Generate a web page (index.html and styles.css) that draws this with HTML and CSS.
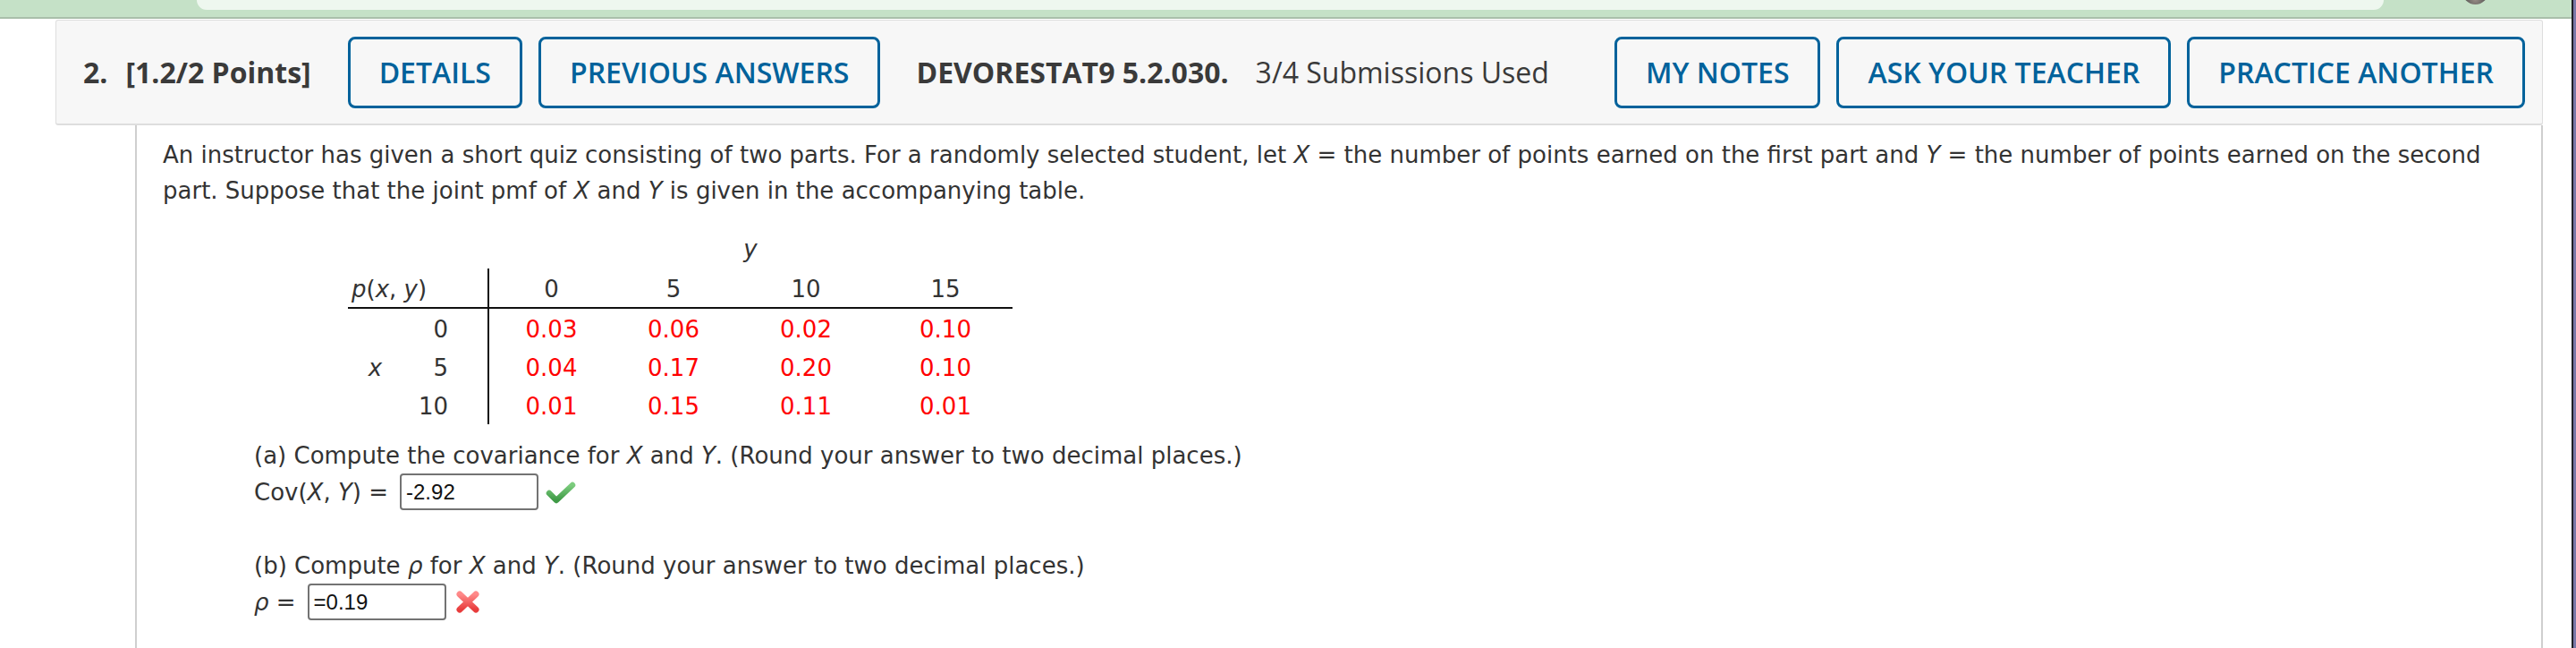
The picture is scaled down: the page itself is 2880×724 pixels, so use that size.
FILE: index.html
```html
<!DOCTYPE html>
<html lang="en">
<head>
<meta charset="utf-8">
<title>Question 2</title>
<link rel="stylesheet" href="styles.css">
</head>
<body>
<div class="page">
  <div class="main">
    <div class="topbar">
      <div class="pill"></div>
      <div class="avatar"></div>
    </div>
    <div class="question">
      <div class="qhead">
        <span class="qnum">2.</span>
        <span class="points">[1.2/2 Points]</span>
        <button class="btn btn-first">DETAILS</button>
        <button class="btn">PREVIOUS ANSWERS</button>
        <span class="code">DEVORESTAT9 5.2.030.</span>
        <span class="subs">3/4 Submissions Used</span>
        <div class="actions">
          <button class="btn">MY NOTES</button>
          <button class="btn">ASK YOUR TEACHER</button>
          <button class="btn">PRACTICE ANOTHER</button>
        </div>
      </div>
      <div class="qbody">
        <p class="prompt">An instructor has given a short quiz consisting of two parts. For a randomly selected student, let <i>X</i> = the number of points earned on the first part and <i>Y</i> = the number of points earned on the second part. Suppose that the joint pmf of <i>X</i> and <i>Y</i> is given in the accompanying table.</p>
        <table class="pmf">
          <colgroup>
            <col class="c-lab"><col class="c-row"><col class="c-a"><col class="c-b"><col class="c-c"><col class="c-d">
          </colgroup>
          <tr class="r-y">
            <td colspan="2"></td>
            <td colspan="4" class="ctr"><i>y</i></td>
          </tr>
          <tr class="r-head">
            <td colspan="2" class="pxy"><i>p</i>(<i>x</i>, <i>y</i>)</td>
            <td class="ctr vline">0</td>
            <td class="ctr">5</td>
            <td class="ctr">10</td>
            <td class="ctr">15</td>
          </tr>
          <tr>
            <td></td>
            <td class="rl">0</td>
            <td class="ctr vline val">0.03</td>
            <td class="ctr val">0.06</td>
            <td class="ctr val">0.02</td>
            <td class="ctr val">0.10</td>
          </tr>
          <tr>
            <td class="ctr"><i>x</i></td>
            <td class="rl">5</td>
            <td class="ctr vline val">0.04</td>
            <td class="ctr val">0.17</td>
            <td class="ctr val">0.20</td>
            <td class="ctr val">0.10</td>
          </tr>
          <tr>
            <td></td>
            <td class="rl">10</td>
            <td class="ctr vline val">0.01</td>
            <td class="ctr val">0.15</td>
            <td class="ctr val">0.11</td>
            <td class="ctr val">0.01</td>
          </tr>
        </table>
        <div class="part">
          <p class="ask">(a) Compute the covariance for <i>X</i> and <i>Y</i>. (Round your answer to two decimal places.)</p>
          <div class="answer">
            <span class="lbl">Cov(<i>X</i>, <i>Y</i>) =</span>
            <input class="field" type="text" value="-2.92" readonly>
            <svg class="mark check" width="34" height="26" viewBox="0 0 34 26">
              <defs>
                <linearGradient id="gg" x1="0" y1="0" x2="0" y2="1">
                  <stop offset="0" stop-color="#7ccc7e"/>
                  <stop offset="1" stop-color="#3f9a46"/>
                </linearGradient>
              </defs>
              <path d="M4 14 L12 22 L30 5" fill="none" stroke="url(#gg)" stroke-width="6.5" stroke-linecap="round" stroke-linejoin="round"/>
            </svg>
          </div>
        </div>
        <div class="part part-b">
          <p class="ask">(b) Compute <i>ρ</i> for <i>X</i> and <i>Y</i>. (Round your answer to two decimal places.)</p>
          <div class="answer">
            <span class="lbl"><i>ρ</i> =</span>
            <input class="field" type="text" value="=0.19" readonly>
            <svg class="mark cross" width="28" height="27" viewBox="0 0 28 27">
              <defs>
                <linearGradient id="rg" x1="0" y1="0" x2="0" y2="1">
                  <stop offset="0" stop-color="#ff8a8a"/>
                  <stop offset="1" stop-color="#e83c3c"/>
                </linearGradient>
              </defs>
              <path d="M5 5 L23 22 M23 5 L5 22" fill="none" stroke="url(#rg)" stroke-width="7" stroke-linecap="round"/>
            </svg>
          </div>
        </div>
      </div>
    </div>
  </div>
  <div class="edge"></div>
</div>
</body>
</html>
```

FILE: styles.css
```css
html, body {
  margin: 0;
  padding: 0;
  background: #ffffff;
}

body {
  width: 2880px;
  height: 724px;
  overflow: hidden;
}

.page {
  display: flex;
  height: 724px;
}

.main {
  flex: 1;
  min-width: 0;
  background: #ffffff;
}

.edge {
  width: 3px;
  border-left: 2px solid #1f1f24;
  background: #7a78a8;
}

/* top green strip */
.topbar {
  height: 19px;
  background: #c5e1c7;
  border-bottom: 2px solid #a9bfaa;
  display: flex;
  align-items: flex-start;
  padding-left: 220px;
}

.pill {
  width: 2445px;
  height: 11px;
  background: #eef7ef;
  border-radius: 0 0 20px 20px;
}

.avatar {
  width: 29px;
  height: 29px;
  margin-left: 88px;
  margin-top: -24px;
  border-radius: 50%;
  background: radial-gradient(circle at 50% 80%, #9a8f88 0, #4a4a4a 55%, #2e2e2e 100%);
}

/* question block */
.question {
  margin: 1px 0 0 62px;
  width: 2781px;
}

.qhead {
  display: flex;
  align-items: center;
  height: 118px;
  box-sizing: border-box;
  background: #f7f7f7;
  border: 1px solid #dedede;
  border-bottom-width: 2px;
  border-radius: 3px;
  padding: 0 19px 0 30px;
  font-family: "Open Sans", "Liberation Sans", sans-serif;
  font-size: 32px;
  color: #3a3a3a;
  white-space: nowrap;
}

.qnum {
  font-weight: 700;
}

.points {
  font-weight: 700;
  margin-left: 20px;
}

.code {
  font-weight: 700;
  margin-left: 40px;
}

.subs {
  font-weight: 400;
  margin-left: 30px;
}

.btn {
  flex: none;
  height: 80px;
  box-sizing: border-box;
  border: 3px solid #00629b;
  border-radius: 8px;
  background: transparent;
  color: #00629b;
  font-family: "Open Sans", "Liberation Sans", sans-serif;
  font-weight: 600;
  font-size: 32px;
  padding: 0 32px;
  margin: 0 0 0 18px;
  white-space: nowrap;
  cursor: pointer;
}

.btn-first {
  margin-left: 41px;
}

.actions {
  margin-left: auto;
  display: flex;
}

/* body */
.qbody {
  margin-left: 89px;
  border-left: 2px solid #cfcfcf;
  border-right: 2px solid #cfcfcf;
  padding: 13px 45px 80px 29px;
  font-family: "DejaVu Sans", Verdana, sans-serif;
  font-size: 26px;
  line-height: 40px;
  color: #333333;
  height: 700px;
}

.prompt {
  margin: 0;
}

i {
  font-style: italic;
}

.pmf {
  margin: 24px 0 0 207px;
  border-collapse: collapse;
  table-layout: fixed;
  width: 743px;
  line-height: 30px;
}

.c-lab { width: 61px; }
.c-row { width: 96px; }
.c-a { width: 140px; }
.c-b { width: 134px; }
.c-c { width: 162px; }
.c-d { width: 150px; }

.pmf td {
  padding: 8px 0 5px;
  vertical-align: top;
}

.pmf .r-y td {
  padding: 6px 0 7px;
}

.pmf .r-head td {
  border-bottom: 2px solid #111111;
  padding: 8px 0 5px;
}

.ctr { text-align: center; }

.rl {
  text-align: right;
  padding-right: 44px !important;
}

.pxy {
  padding-left: 4px !important;
}

.vline {
  border-left: 2px solid #111111;
}

.val {
  color: #ff0000;
}

.part {
  margin: 15px 0 0 102px;
}

.part-b {
  margin-top: 42px;
}

.ask {
  margin: 0;
}

.answer {
  display: flex;
  align-items: center;
  height: 41px;
}

.field {
  width: 155px;
  height: 41px;
  box-sizing: border-box;
  margin-left: 13px;
  border: 2px solid #737373;
  border-radius: 4px;
  padding: 0 5px;
  font-family: "Liberation Sans", Arial, sans-serif;
  font-size: 24px;
  color: #111111;
  background: #ffffff;
  outline: none;
}

.mark {
  display: block;
}

.check {
  margin-left: 8px;
}

.cross {
  margin-left: 10px;
}
```
